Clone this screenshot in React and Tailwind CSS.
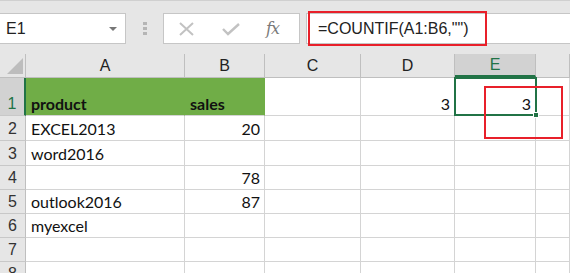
const cols = [
  { key: "A", w: "w-[159px]" },
  { key: "B", w: "w-[80px]" },
  { key: "C", w: "w-[96px]" },
  { key: "D", w: "w-[94px]" },
  { key: "E", w: "w-[81px]" },
  { key: "F", w: "flex-1", hidden: true },
];

const rows = [
  { n: 1, h: "h-[38px]", cells: { A: "product", B: "sales", D: "3", E: "3" } },
  { n: 2, h: "h-[25px]", cells: { A: "EXCEL2013", B: "20" } },
  { n: 3, h: "h-[25px]", cells: { A: "word2016" } },
  { n: 4, h: "h-[24px]", cells: { B: "78" } },
  { n: 5, h: "h-[24px]", cells: { A: "outlook2016", B: "87" } },
  { n: 6, h: "h-[24px]", cells: { A: "myexcel" } },
  { n: 7, h: "h-[24px]", cells: {} },
  { n: 8, h: "h-[24px]", cells: {} },
];

function Cell({ col, row, value }) {
  const isNum = value !== undefined && /^\d+$/.test(value);
  const green = row.n === 1 && (col.key === "A" || col.key === "B");
  return (
    <div
      className={`${col.w} shrink-0 flex items-end pb-[3px] leading-[16px] border-b border-r ${
        green
          ? "bg-[#70ad47] border-r-[#70ad47] border-b-[#d4d4d4] font-bold"
          : "bg-white border-[#d4d4d4]"
      } ${isNum ? "justify-end pr-[4px]" : "pl-[5px]"}`}
    >
      {value}
    </div>
  );
}

export default function App() {
  return (
    <div className="relative w-[570px] h-[273px] overflow-hidden bg-[#e6e6e6] border-t border-[#d0d0d0] text-[#111] font-['Lato',sans-serif]">
      {/* formula bar */}
      <div className="flex items-stretch h-[53px] pt-[12px] pb-[10px]">
        <div className="w-[126px] flex items-center justify-between bg-white border border-l-0 border-[#c6c6c6] pl-[6px] pr-[8px] font-['Liberation_Sans',sans-serif] text-[16px] text-[#222]">
          <span>E1</span>
          <span className="w-0 h-0 border-l-[4px] border-r-[4px] border-t-[4px] border-l-transparent border-r-transparent border-t-[#777]" />
        </div>
        <div className="w-[37px] flex flex-col items-center justify-center gap-[2px]">
          <span className="w-[4px] h-[3px] bg-[#b5b5b5]" />
          <span className="w-[4px] h-[3px] bg-[#b5b5b5]" />
          <span className="w-[4px] h-[3px] bg-[#b5b5b5]" />
        </div>
        <div className="w-[137px] flex items-center bg-white border border-[#c6c6c6]">
          <svg className="ml-[14px]" width="17" height="14" viewBox="0 0 17 14">
            <path d="M2 1 L15 13 M15 1 L2 13" stroke="#c2c2c2" strokeWidth="2" fill="none" />
          </svg>
          <svg className="ml-[27px]" width="18" height="14" viewBox="0 0 18 14">
            <path d="M1 7 L6 12 L17 2" stroke="#c2c2c2" strokeWidth="2.4" fill="none" />
          </svg>
          <span className="ml-[26px] font-['DejaVu_Serif',serif] italic text-[16px] text-[#7a7a7a] tracking-[-1px]">fx</span>
        </div>
        <div className="w-[6px]" />
        <div className="flex-1 relative flex items-center bg-white border border-r-0 border-[#c6c6c6] pl-[11px] font-['Liberation_Sans',sans-serif] text-[16px] text-[#222]">
          =COUNTIF(A1:B6,"")
          <div className="absolute left-[1px] top-[-3px] w-[179px] h-[35px] border-2 border-[#e8202a]" />
        </div>
      </div>

      {/* column headers */}
      <div className="flex h-[24px] border-b border-[#bfbfbf]">
        <div className="w-[26px] shrink-0 border-r border-[#bfbfbf]">
          <svg width="25" height="23" viewBox="0 0 25 23">
            <polygon points="23,4 23,20 7,20" fill="#bdbdbd" />
          </svg>
        </div>
        {cols.map((c) => (
          <div
            key={c.key}
            className={`${c.w} shrink-0 flex items-center justify-center border-r border-[#bfbfbf] text-[16px] font-['Liberation_Sans',sans-serif] ${
              c.key === "E"
                ? "bg-[#d2d2d2] text-[#217346] border-b-2 border-b-[#217346]"
                : "text-[#222]"
            }`}
          >
            {c.hidden ? "" : c.key}
          </div>
        ))}
      </div>

      {/* rows */}
      <div className="relative text-[16px]">
        {rows.map((r) => (
          <div key={r.n} className={`flex ${r.h}`}>
            <div
              className={`w-[26px] shrink-0 flex items-end justify-center pb-[3px] leading-[16px] border-b border-[#c8c8c8] text-[16px] font-['Liberation_Sans',sans-serif] ${
                r.n === 1
                  ? "bg-[#d2d2d2] text-[#217346] border-r-2 border-r-[#217346]"
                  : "border-r border-r-[#bfbfbf] text-[#333]"
              }`}
            >
              {r.n}
            </div>
            {cols.map((c) => (
              <Cell key={c.key} col={c} row={r} value={r.cells[c.key]} />
            ))}
          </div>
        ))}

        {/* active cell E1 */}
        <div className="absolute left-[454px] top-[-1px] w-[83px] h-[39px] border-2 border-[#217346]">
          <span className="absolute right-[-4px] bottom-[-4px] w-[6px] h-[6px] bg-[#217346] border border-white" />
        </div>
        {/* red annotation */}
        <div className="absolute left-[484px] top-[8px] w-[79px] h-[53px] border-2 border-[#e8202a]" />
      </div>
    </div>
  );
}
